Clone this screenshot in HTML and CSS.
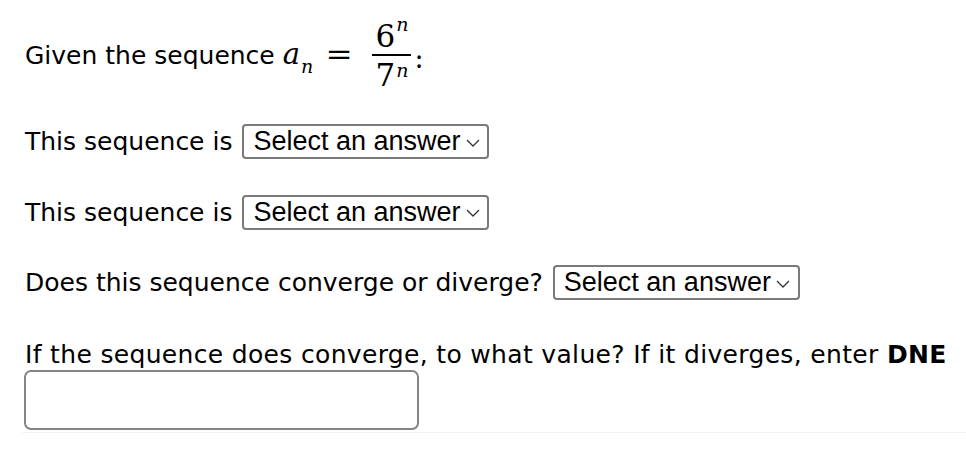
FILE: index.html
```html
<!DOCTYPE html>
<html>
<head>
<meta charset="utf-8">
<link rel="stylesheet" href="styles.css">
</head>
<body>
<div class="question">
  <p class="intro">Given the sequence <span class="math"><span class="var">a</span><span class="sub">n</span><span class="eq">=</span><span class="frac"><span class="num">6<span class="sup">n</span></span><span class="bar"></span><span class="den">7<span class="sup sup-den">n</span></span></span><span class="colon">:</span></span></p>
  <p class="row">This sequence is <span class="select"><span class="label">Select an answer</span><svg class="chev" viewBox="0 0 14 8" width="14" height="8"><path d="M1 1 L7 7 L13 1" fill="none" stroke="#333" stroke-width="1.3"/></svg></span></p>
  <p class="row">This sequence is <span class="select"><span class="label">Select an answer</span><svg class="chev" viewBox="0 0 14 8" width="14" height="8"><path d="M1 1 L7 7 L13 1" fill="none" stroke="#333" stroke-width="1.3"/></svg></span></p>
  <p class="row">Does this sequence converge or diverge? <span class="select"><span class="label">Select an answer</span><svg class="chev" viewBox="0 0 14 8" width="14" height="8"><path d="M1 1 L7 7 L13 1" fill="none" stroke="#333" stroke-width="1.3"/></svg></span></p>
  <p class="last">If the sequence does converge, to what value? If it diverges, enter <b>DNE</b></p>
  <input class="answer" type="text" aria-label="answer">
  <div class="rule"></div>
</div>
</body>
</html>
```
FILE: styles.css
```css
html, body {
  margin: 0;
  padding: 0;
  background: #fff;
}
body {
  font-family: "DejaVu Sans", sans-serif;
  font-size: 25px;
  color: #000;
}
.question {
  padding: 22px 0 0 25px;
}
p {
  margin: 0;
}
.intro {
  line-height: 30px;
  white-space: nowrap;
}
.math {
  font-family: "DejaVu Serif", serif;
  font-size: 29px;
}
.var {
  font-style: italic;
}
.sub {
  font-style: italic;
  font-size: 19px;
  line-height: 0;
  vertical-align: -9px;
  margin-left: 1px;
}
.eq {
  display: inline-block;
  margin: 0 19px 0 14px;
  transform: scaleX(1.12);
}
.frac {
  display: inline-flex;
  flex-direction: column;
  align-items: center;
  vertical-align: 17px;
  padding: 0 1px;
}
.num, .den {
  display: block;
  height: 28px;
  line-height: 28px;
  font-size: 31px;
  padding: 0 2px 0 4px;
}
.sup {
  font-style: italic;
  font-size: 19px;
  line-height: 0;
  vertical-align: 16px;
  margin-left: 1px;
}
.sup-den {
  vertical-align: 9px;
}
.bar {
  align-self: stretch;
  height: 2px;
  background: #000;
  margin: 4px 0 5px;
}
.colon {
  display: inline-block;
  margin-left: 3px;
  vertical-align: -4px;
  font-size: 27px;
  line-height: 0;
}
.row {
  display: flex;
  align-items: center;
  white-space: pre;
  margin-top: 35.5px;
}
.intro + .row {
  margin-top: 35px;
}
.select {
  display: inline-flex;
  align-items: center;
  box-sizing: border-box;
  width: 247px;
  height: 35px;
  padding: 0 8px 0 9px;
  margin-left: 2px;
  border: 2px solid #7a7a7a;
  border-radius: 4px;
  font-family: "Liberation Sans", Arial, sans-serif;
  font-size: 27px;
  line-height: 1;
  color: #000;
}
.label {
  flex: 0 0 auto;
}
.chev {
  display: block;
  flex: 0 0 auto;
  margin: 2px 0 0 5px;
}
.last {
  margin-top: 39.5px;
  line-height: 30px;
  white-space: nowrap;
  letter-spacing: 0.33px;
}
.answer {
  display: block;
  box-sizing: border-box;
  width: 395px;
  height: 60px;
  margin: 0 0 0 -1px;
  border: 2px solid #858585;
  border-radius: 7px;
  background: #fff;
  font-size: 24px;
  outline: none;
}
.rule {
  height: 1px;
  background: #f3f3f3;
  margin: 2px 0 0 -3px;
}
```
